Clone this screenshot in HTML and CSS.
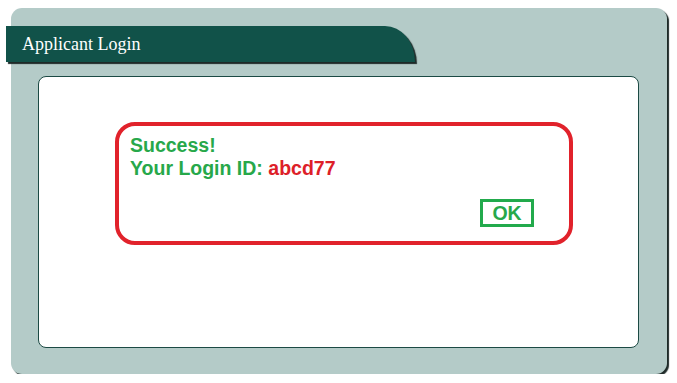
FILE: index.html
```html
<!DOCTYPE html>
<html>
<head>
<meta charset="utf-8">
<link rel="stylesheet" href="styles.css">
</head>
<body>
<div class="panel">
  <div class="tab">Applicant Login</div>
  <div class="content">
    <div class="alert">
      <div class="msg">
        <div>Success!</div>
        <div>Your Login ID: <span class="id">abcd77</span></div>
      </div>
      <div class="actions">
        <button class="ok">OK</button>
      </div>
    </div>
  </div>
</div>
</body>
</html>
```
FILE: styles.css
```css
html, body {
  margin: 0;
  padding: 0;
  background: #ffffff;
}
.panel {
  box-sizing: border-box;
  margin: 8px 0 0 11px;
  width: 656px;
  height: 366px;
  background: #b4cbc8;
  border-radius: 11px;
  box-shadow: 2px 2px 1px #1e2a28;
  padding: 18px 27px 26px 27px;
}
.tab {
  box-sizing: border-box;
  margin-left: -32px;
  width: 409px;
  height: 36px;
  background: #115249;
  border-top-right-radius: 30px 36px;
  box-shadow: 2px 2px 1px #1e2a28;
  color: #ffffff;
  font-family: "Liberation Serif", "Times New Roman", serif;
  font-size: 18px;
  line-height: 36px;
  padding-left: 16px;
}
.content {
  box-sizing: border-box;
  margin-top: 14px;
  width: 601px;
  height: 272px;
  background: #ffffff;
  border: 1px solid #1c4a44;
  border-radius: 8px;
  padding: 45px 0 0 76px;
}
.alert {
  box-sizing: border-box;
  width: 458px;
  height: 123px;
  border: 4px solid #e1222b;
  border-radius: 20px;
  padding: 8px 35px 0 11px;
  font-family: "Liberation Sans", Arial, sans-serif;
  font-weight: bold;
  font-size: 19.5px;
  line-height: 23px;
  color: #27a84a;
}
.id {
  color: #dd2028;
}
.actions {
  display: flex;
  justify-content: flex-end;
  margin-top: 19px;
}
.ok {
  box-sizing: border-box;
  width: 54px;
  height: 28px;
  border: 3px solid #22aa4c;
  background: #ffffff;
  color: #27a84a;
  font-family: "Liberation Sans", Arial, sans-serif;
  font-weight: bold;
  font-size: 19.5px;
  line-height: 22px;
  padding: 0;
  margin: 0;
}
```
